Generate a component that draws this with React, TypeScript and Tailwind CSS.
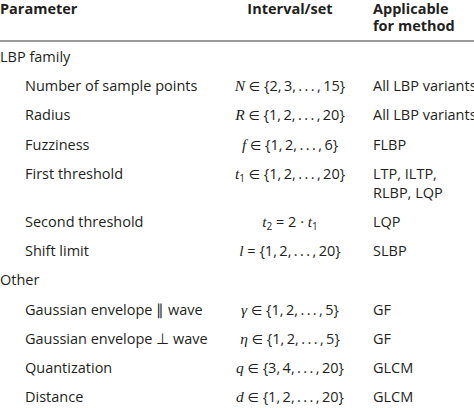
import React from "react";

const sans = { fontFamily: '"Open Sans", "Noto Sans", sans-serif' };

function V({ children }: { children: React.ReactNode }) {
  return (
    <span
      className="italic leading-none"
      style={{ fontFamily: '"Liberation Serif", serif', fontSize: "15.5px" }}
    >
      {children}
    </span>
  );
}

function Sub({ children }: { children: React.ReactNode }) {
  return <sub className="text-[10px] leading-none">{children}</sub>;
}

const t = "\u2009";
function Set({ a, b, c }: { a: string; b: string; c: string }) {
  return (
    <span>
      {"{"}
      {a},{t}
      {b},{t}.{t}.{t}.{t},{t}
      {c}
      {"}"}
    </span>
  );
}

function El() {
  return (
    <span className="leading-none" style={{ fontFamily: '"DejaVu Sans", sans-serif', fontSize: "13px" }}>
      ∈
    </span>
  );
}

type Row = {
  param: React.ReactNode;
  interval?: React.ReactNode;
  method?: React.ReactNode;
  group?: boolean;
  h: string;
};

const rows: Row[] = [
  { param: "LBP family", group: true, h: "h-[29px]" },
  {
    param: "Number of sample points",
    interval: (
      <>
        <V>N</V> <El /> <Set a="2" b="3" c="15" />
      </>
    ),
    method: "All LBP variants",
    h: "h-[29px]",
  },
  {
    param: "Radius",
    interval: (
      <>
        <V>R</V> <El /> <Set a="1" b="2" c="20" />
      </>
    ),
    method: "All LBP variants",
    h: "h-[29.5px]",
  },
  {
    param: "Fuzziness",
    interval: (
      <>
        <V>f</V> <El /> <Set a="1" b="2" c="6" />
      </>
    ),
    method: "FLBP",
    h: "h-[29.5px]",
  },
  {
    param: "First threshold",
    interval: (
      <>
        <V>t</V>
        <Sub>1</Sub> <El /> <Set a="1" b="2" c="20" />
      </>
    ),
    method: (
      <>
        <div>LTP, ILTP,</div>
        <div>RLBP, LQP</div>
      </>
    ),
    h: "h-[48px]",
  },
  {
    param: "Second threshold",
    interval: (
      <>
        <V>t</V>
        <Sub>2</Sub> = 2 · <V>t</V>
        <Sub>1</Sub>
      </>
    ),
    method: "LQP",
    h: "h-[28.5px]",
  },
  {
    param: "Shift limit",
    interval: (
      <>
        <V>l</V> = <Set a="1" b="2" c="20" />
      </>
    ),
    method: "SLBP",
    h: "h-[29px]",
  },
  { param: "Other", group: true, h: "h-[30px]" },
  {
    param: "Gaussian envelope ∥ wave",
    interval: (
      <>
        <V>γ</V> <El /> <Set a="1" b="2" c="5" />
      </>
    ),
    method: "GF",
    h: "h-[29px]",
  },
  {
    param: "Gaussian envelope ⊥ wave",
    interval: (
      <>
        <V>η</V> <El /> <Set a="1" b="2" c="5" />
      </>
    ),
    method: "GF",
    h: "h-[29px]",
  },
  {
    param: "Quantization",
    interval: (
      <>
        <V>q</V> <El /> <Set a="3" b="4" c="20" />
      </>
    ),
    method: "GLCM",
    h: "h-[29px]",
  },
  {
    param: "Distance",
    interval: (
      <>
        <V>d</V> <El /> <Set a="1" b="2" c="20" />
      </>
    ),
    method: "GLCM",
    h: "h-[29px]",
  },
];

export default function App() {
  return (
    <div
      className="w-[474px] h-[408px] overflow-hidden bg-white text-[#231f20] text-[14.5px]"
      style={sans}
    >
      <div className="grid grid-cols-[215px_150px_1fr] font-bold leading-[17px] h-[40px]">
        <div>Parameter</div>
        <div className="text-center">Interval/set</div>
        <div className="pl-[8px]">
          <div>Applicable</div>
          <div>for method</div>
        </div>
      </div>
      <div className="h-[2px] bg-[#9a9a9a]" />
      {rows.map((r, i) =>
        r.group ? (
          <div key={i} className={`${r.h} pt-[5px] leading-[19px] whitespace-nowrap`}>
            {r.param}
          </div>
        ) : (
          <div
            key={i}
            className={`${r.h} pt-[5px] grid grid-cols-[215px_150px_1fr] items-start leading-[19px] whitespace-nowrap`}
          >
            <div className="pl-[25px] h-[19px]">{r.param}</div>
            <div className="text-center h-[19px]">{r.interval}</div>
            <div className="pl-[8px]">{r.method}</div>
          </div>
        )
      )}
    </div>
  );
}
